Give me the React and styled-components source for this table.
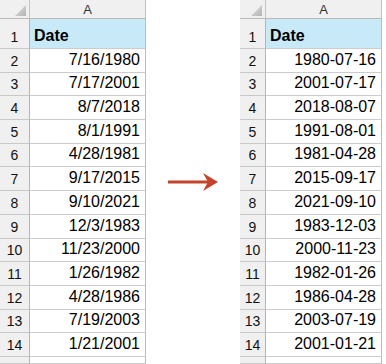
import React from 'react';
import styled, { createGlobalStyle } from 'styled-components';

const Global = createGlobalStyle`
  html, body { margin: 0; padding: 0; background: #fff; }
  body { font-family: "Liberation Sans", Arial, sans-serif; }
`;

const Page = styled.div`
  display: flex;
  width: 386px;
  height: 364px;
  overflow: hidden;
  background: #fff;
`;

const Sheet = styled.div`
  display: flex;
  flex-direction: column;
  flex: none;
  height: 364px;
`;

const Row = styled.div`
  display: flex;
  flex: ${p => (p.$fill ? '1' : 'none')};
  height: ${p => (p.$fill ? 'auto' : `${p.$h}px`)};
`;

const Corner = styled.div`
  box-sizing: border-box;
  width: ${p => p.$w}px;
  background: #f0f0f0;
  border-right: 1px solid #c4c4c4;
  border-bottom: 1px solid #b8b8b8;
  display: flex;
  align-items: flex-end;
  justify-content: flex-end;
  padding: 0 3px 2px 0;
`;

const ColHeader = styled.div`
  box-sizing: border-box;
  width: 116px;
  background: #f0f0f0;
  border-right: 1px solid #c0c0c0;
  border-bottom: 1px solid #b8b8b8;
  display: flex;
  align-items: flex-end;
  justify-content: center;
  padding-bottom: 2px;
  font-size: 13px;
  line-height: 1;
  color: #333;
`;

const RowNum = styled.div`
  box-sizing: border-box;
  width: ${p => p.$w}px;
  background: #f0f0f0;
  border-right: 1px solid #b4b4b4;
  border-bottom: 1px solid #c8c8c8;
  display: flex;
  align-items: flex-end;
  justify-content: center;
  padding-bottom: 4px;
  font-size: 14px;
  line-height: 1;
  color: #111;
`;

const Cell = styled.div`
  box-sizing: border-box;
  width: 116px;
  background: ${p => (p.$title ? '#c8eaf8' : '#fff')};
  border-right: 1px solid #bcbcbc;
  border-bottom: 1px solid #cccccc;
  display: flex;
  align-items: flex-end;
  justify-content: ${p => (p.$title ? 'flex-start' : 'flex-end')};
  padding: 0 5px 4px 4px;
  font-size: 16px;
  font-weight: ${p => (p.$title ? 700 : 400)};
  line-height: 1;
  color: #000;
`;

const ArrowCol = styled.div`
  flex: none;
  width: 94px;
  display: flex;
  align-items: center;
  justify-content: center;
`;

const leftData = ['7/16/1980', '7/17/2001', '8/7/2018', '8/1/1991', '4/28/1981', '9/17/2015', '9/10/2021', '12/3/1983', '11/23/2000', '1/26/1982', '4/28/1986', '7/19/2003', '1/21/2001'];
const rightData = ['1980-07-16', '2001-07-17', '2018-08-07', '1991-08-01', '1981-04-28', '2015-09-17', '2021-09-10', '1983-12-03', '2000-11-23', '1982-01-26', '1986-04-28', '2003-07-19', '2001-01-21'];

const SelectAll = () => (
  <svg width="11" height="11" viewBox="0 0 11 11">
    <defs>
      <linearGradient id="sa" x1="0" y1="0" x2="1" y2="1">
        <stop offset="0" stopColor="#e0e0e0" />
        <stop offset="1" stopColor="#b4b4b4" />
      </linearGradient>
    </defs>
    <polygon points="0,11 11,11 11,0" fill="url(#sa)" />
  </svg>
);

const Arrow = () => (
  <svg width="50" height="18" viewBox="0 0 50 18">
    <rect x="0" y="7.5" width="40" height="3" fill="#c4432a" />
    <polygon points="35,0 50,9 35,18 40,9" fill="#c4432a" />
  </svg>
);

const SpreadSheet = ({ numW, data }) => (
  <Sheet>
    <Row $h={19}>
      <Corner $w={numW}><SelectAll /></Corner>
      <ColHeader>A</ColHeader>
    </Row>
    <Row $h={30}>
      <RowNum $w={numW}>1</RowNum>
      <Cell $title>Date</Cell>
    </Row>
    {data.map((d, i) => (
      <Row key={d} $h={23.7}>
        <RowNum $w={numW}>{i + 2}</RowNum>
        <Cell>{d}</Cell>
      </Row>
    ))}
    <Row $fill>
      <RowNum $w={numW} />
      <Cell />
    </Row>
  </Sheet>
);

export default function App() {
  return (
    <>
      <Global />
      <Page>
        <SpreadSheet numW={30} data={leftData} />
        <ArrowCol><Arrow /></ArrowCol>
        <SpreadSheet numW={26} data={rightData} />
      </Page>
    </>
  );
}
